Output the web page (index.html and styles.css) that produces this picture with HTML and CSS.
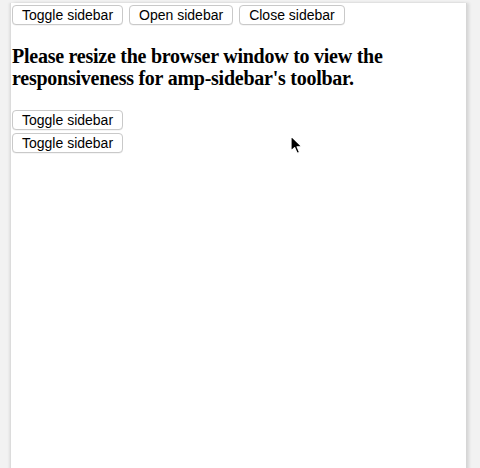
FILE: index.html
```html
<!DOCTYPE html>
<html>
<head>
<meta charset="utf-8">
<link rel="stylesheet" href="styles.css">
</head>
<body>
<div class="page">
  <div class="toolbar">
    <button class="btn">Toggle sidebar</button>
    <button class="btn">Open sidebar</button>
    <button class="btn">Close sidebar</button>
  </div>
  <h2 class="title">Please resize the browser window to view the responsiveness for amp-sidebar's toolbar.</h2>
  <div class="stack">
    <button class="btn">Toggle sidebar</button>
    <button class="btn">Toggle sidebar</button>
  </div>
  <svg class="cursor" width="14" height="20" viewBox="0 0 14 20">
    <path d="M1 1 L1 16 L4.6 12.6 L7.2 18.4 L9.6 17.4 L7.1 11.8 L12 11.8 Z" fill="#000" stroke="#fff" stroke-width="1.2" stroke-linejoin="round"/>
  </svg>
</div>
</body>
</html>
```

FILE: styles.css
```css
html, body {
  margin: 0;
  padding: 0;
  background: #f2f2f2;
  height: 100%;
  overflow: hidden;
}
.page {
  position: relative;
  margin: 3px 0 0 11px;
  width: 455px;
  height: 480px;
  background: #fff;
  box-shadow: -1px 0 0 #dcdcdc, -2px 0 2px rgba(0,0,0,0.08), 1px 0 0 #d6d6d6, 3px 0 3px rgba(0,0,0,0.12);
  padding: 2px 0 0 1px;
  box-sizing: border-box;
}
.toolbar {
  display: flex;
  gap: 6px;
}
.btn {
  font-family: "Liberation Sans", Arial, sans-serif;
  font-size: 14px;
  height: 20px;
  line-height: 18px;
  padding: 0 9px;
  margin: 0;
  border: 1px solid #c9c9c9;
  border-radius: 4px;
  background: #fff;
  color: #000;
  box-shadow: 0 0.5px 0 rgba(0,0,0,0.08);
}
.title {
  font-family: "Liberation Serif", "Times New Roman", serif;
  font-weight: bold;
  font-size: 20px;
  letter-spacing: -0.25px;
  line-height: 22px;
  margin: 20px 0 0 0;
  color: #000;
}
.stack {
  display: flex;
  flex-direction: column;
  align-items: flex-start;
  gap: 3px;
  margin-top: 21px;
}
.cursor {
  position: absolute;
  left: 279px;
  top: 132px;
}
```
